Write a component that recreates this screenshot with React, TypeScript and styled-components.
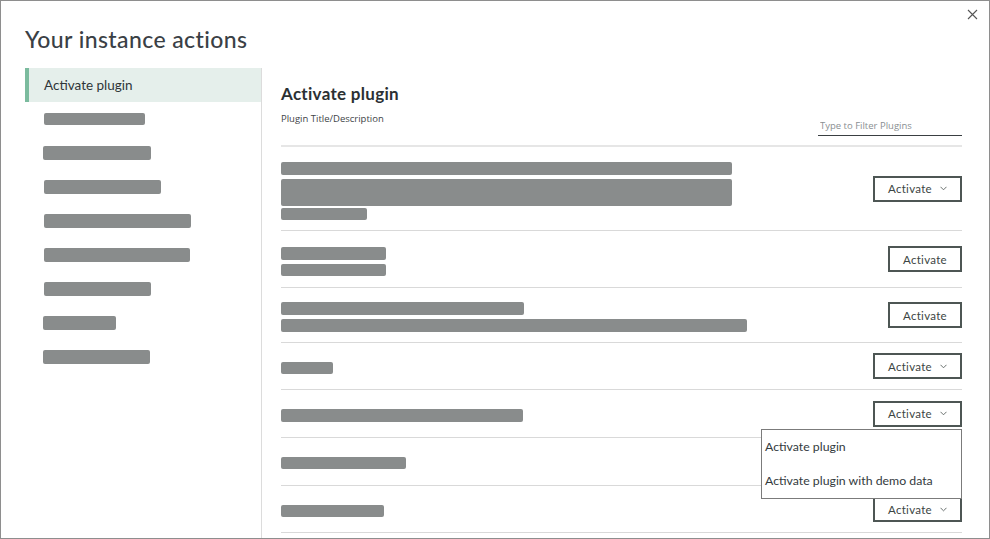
import React from "react";
import styled, { createGlobalStyle } from "styled-components";

const GlobalStyle = createGlobalStyle`
  html, body {
    margin: 0;
    padding: 0;
    background: #ffffff;
  }
  body {
    font-family: "Lato", "Open Sans", sans-serif;
    color: #343a3d;
  }
  * {
    box-sizing: border-box;
  }
`;

interface BarSpec {
  w: number;
  h: number;
  mt?: number;
}

interface RowSpec {
  pad: string;
  bars: BarSpec[];
  button: "plain" | "dropdown";
  open?: boolean;
}

const sideItems = [
  { w: 101, h: 12, x: 19 },
  { w: 108, h: 14, x: 18 },
  { w: 117, h: 14, x: 19 },
  { w: 147, h: 14, x: 19 },
  { w: 146, h: 14, x: 19 },
  { w: 107, h: 14, x: 19 },
  { w: 73, h: 14, x: 18 },
  { w: 107, h: 14, x: 18 },
];

// pad = padding of the bar column, tuned so each row gets the reference height
const rows: RowSpec[] = [
  {
    pad: "5px 0 0",
    bars: [
      { w: 451, h: 13 },
      { w: 451, h: 27, mt: 4 },
      { w: 86, h: 12, mt: 2 },
    ],
    button: "dropdown",
  },
  {
    pad: "6px 0 1px",
    bars: [
      { w: 105, h: 13 },
      { w: 105, h: 12, mt: 4 },
    ],
    button: "plain",
  },
  {
    pad: "4px 0 0",
    bars: [
      { w: 243, h: 13 },
      { w: 466, h: 13, mt: 4 },
    ],
    button: "plain",
  },
  { pad: "9px 0 5px", bars: [{ w: 52, h: 12 }], button: "dropdown" },
  { pad: "9px 0 5px", bars: [{ w: 242, h: 13 }], button: "dropdown", open: true },
  { pad: "9px 0 6px", bars: [{ w: 125, h: 12 }], button: "dropdown" },
  { pad: "9px 0 5px", bars: [{ w: 103, h: 12 }], button: "dropdown" },
];

const App: React.FC = () => {
  return (
    <>
      <GlobalStyle />
      <Frame>
        <CloseButton aria-label="Close">
          <svg width="11" height="11" viewBox="0 0 11 11">
            <path d="M1 1 L10 10 M10 1 L1 10" stroke="#555" strokeWidth="1.1" fill="none" />
          </svg>
        </CloseButton>
        <Title>Your instance actions</Title>
        <Body>
          <Sidebar>
            <SideItem $active>Activate plugin</SideItem>
            {sideItems.map((item, i) => (
              <SideItem key={i} $pad={item.x}>
                <Bar $w={item.w} $h={item.h} />
              </SideItem>
            ))}
          </Sidebar>
          <Main>
            <Heading>Activate plugin</Heading>
            <ToolRow>
              <ColumnLabel>Plugin Title/Description</ColumnLabel>
              <FilterInput placeholder="Type to Filter Plugins" />
            </ToolRow>
            {rows.map((row, i) => (
              <PluginRow key={i}>
                <BarStack $pad={row.pad}>
                  {row.bars.map((bar, j) => (
                    <Bar key={j} $w={bar.w} $h={bar.h} $mt={bar.mt} />
                  ))}
                </BarStack>
                <ButtonWrap>
                  <ActivateButton>
                    Activate
                    {row.button === "dropdown" && (
                      <svg width="7" height="5" viewBox="0 0 7 5">
                        <polyline points="0.5,0.8 3.5,3.8 6.5,0.8" stroke="#5a6260" strokeWidth="0.9" fill="none" />
                      </svg>
                    )}
                  </ActivateButton>
                  {row.open && (
                    <Menu>
                      <MenuItem>Activate plugin</MenuItem>
                      <MenuItem>Activate plugin with demo data</MenuItem>
                    </Menu>
                  )}
                </ButtonWrap>
              </PluginRow>
            ))}
          </Main>
        </Body>
      </Frame>
    </>
  );
};
export default App;

const Frame = styled.div`
  position: relative;
  width: 990px;
  height: 539px;
  border: 1px solid #8e8e8e;
  padding: 23px 27px 0 24px;
  display: flex;
  flex-direction: column;
  overflow: hidden;
  background: #fff;
`;

const CloseButton = styled.button`
  position: absolute;
  top: 8px;
  right: 11px;
  width: 11px;
  height: 11px;
  padding: 0;
  border: none;
  background: none;
  display: flex;
`;

const Title = styled.h1`
  margin: 0;
  font-size: 23px;
  line-height: 30px;
  font-weight: 500;
  color: #3a4045;
  letter-spacing: 0.4px;
`;

const Body = styled.div`
  flex: 1;
  margin-top: 14px;
  display: grid;
  grid-template-columns: 237px 1fr;
`;

const Sidebar = styled.nav`
  border-right: 1px solid #dcdcdc;
  display: flex;
  flex-direction: column;
`;

const SideItem = styled.div<{ $active?: boolean; $pad?: number }>`
  height: 34px;
  display: flex;
  align-items: center;
  font-size: 13.5px;
  color: #2f3538;
  padding-left: ${(p) => (p.$active ? 15 : p.$pad ?? 19)}px;
  background: ${(p) => (p.$active ? "#e5efeb" : "transparent")};
  border-left: ${(p) => (p.$active ? "4px solid #7bbb9e" : "none")};
`;

const Bar = styled.div<{ $w: number; $h: number; $mt?: number }>`
  width: ${(p) => p.$w}px;
  height: ${(p) => p.$h}px;
  margin-top: ${(p) => p.$mt ?? 0}px;
  background: #898c8c;
  border-radius: 2px;
`;

const Main = styled.section`
  padding: 16px 0 0 19px;
  display: flex;
  flex-direction: column;
`;

const Heading = styled.h2`
  margin: 0;
  font-size: 17px;
  line-height: 20px;
  font-weight: 700;
  letter-spacing: 0.3px;
  color: #2b3033;
`;

const ToolRow = styled.div`
  height: 43px;
  display: flex;
  justify-content: space-between;
  align-items: flex-start;
  border-bottom: 2px solid #e6e6e6;
`;

const ColumnLabel = styled.span`
  margin-top: 8px;
  font-family: "Open Sans", sans-serif;
  font-size: 9.5px;
  line-height: 14px;
  color: #3e4447;
`;

const FilterInput = styled.input`
  margin-top: 14px;
  width: 144px;
  height: 18px;
  padding: 0 2px 2px;
  border: none;
  border-bottom: 1px solid #3a3f42;
  font-family: "Open Sans", sans-serif;
  font-size: 9.5px;
  color: #333;
  outline: none;
  background: transparent;

  &::placeholder {
    color: #8a8f92;
  }
`;

const PluginRow = styled.div`
  display: flex;
  justify-content: space-between;
  align-items: center;
  padding: 10px 0;
  border-bottom: 1px solid #d9d9d9;
`;

const BarStack = styled.div<{ $pad: string }>`
  display: flex;
  flex-direction: column;
  padding: ${(p) => p.$pad};
`;

const ButtonWrap = styled.div`
  position: relative;
`;

const ActivateButton = styled.button`
  height: 26px;
  padding: 0 13px;
  display: flex;
  align-items: center;
  gap: 8px;
  border: 2px solid #4d5654;
  background: #fff;
  font-family: "Lato", sans-serif;
  font-size: 11.5px;
  letter-spacing: 0.3px;
  color: #3c4543;
`;

const Menu = styled.div`
  position: absolute;
  top: calc(100% + 2px);
  right: 0;
  width: 201px;
  border: 1px solid #7b7b7b;
  background: #fff;
  z-index: 2;
`;

const MenuItem = styled.div`
  height: 34px;
  display: flex;
  align-items: center;
  padding-left: 3px;
  font-family: "Lato", sans-serif;
  font-size: 12.3px;
  color: #333a3d;
`;
